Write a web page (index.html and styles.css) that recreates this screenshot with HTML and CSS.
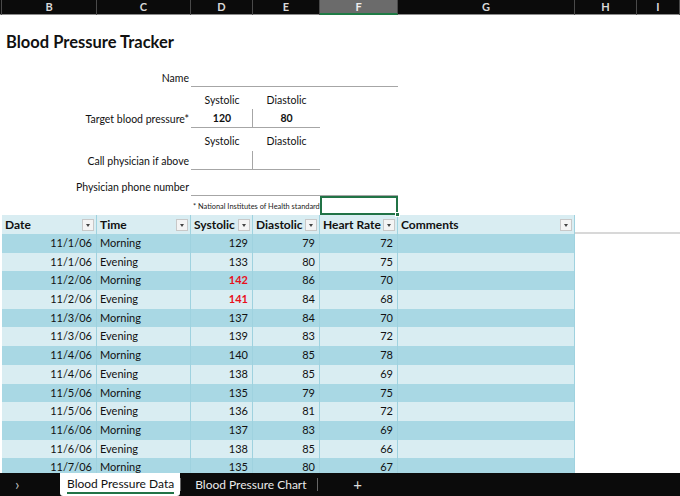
FILE: index.html
```html
<!DOCTYPE html>
<html>
<head>
<meta charset="utf-8">
<link rel="stylesheet" href="styles.css">
</head>
<body>
<div class="app">
  <div class="colhead">
    <div class="ch"></div>
    <div class="ch">B</div>
    <div class="ch">C</div>
    <div class="ch">D</div>
    <div class="ch">E</div>
    <div class="ch sel">F</div>
    <div class="ch">G</div>
    <div class="ch">H</div>
    <div class="ch">I</div>
  </div>
  <div class="sheet">
    <div class="title">Blood Pressure Tracker</div>

    <div class="frow h23">
      <div class="lbl">Name</div>
      <div class="cell ul"></div><div class="cell ul"></div><div class="cell ul"></div>
    </div>
    <div class="frow h22">
      <div class="lbl"></div>
      <div class="cell ctr">Systolic</div><div class="cell ctr">Diastolic</div><div class="cell"></div>
    </div>
    <div class="frow h19">
      <div class="lbl">Target blood pressure*</div>
      <div class="cell ctr ul vr bold">120</div><div class="cell ctr ul bold">80</div><div class="cell"></div>
    </div>
    <div class="frow h22">
      <div class="lbl"></div>
      <div class="cell ctr">Systolic</div><div class="cell ctr">Diastolic</div><div class="cell"></div>
    </div>
    <div class="frow h20">
      <div class="lbl">Call physician if above</div>
      <div class="cell ul vr"></div><div class="cell ul"></div><div class="cell"></div>
    </div>
    <div class="frow h26">
      <div class="lbl">Physician phone number</div>
      <div class="cell ul"></div><div class="cell ul"></div><div class="cell ul"></div>
    </div>
    <div class="frow h19 note-row">
      <div class="lbl"></div>
      <div class="note">* National Institutes of Health standard</div>
      <div class="active"><span class="handle"></span></div>
    </div>

    <div class="tbl">
      <div class="th"><span>Date</span><i class="dd"></i></div>
      <div class="th"><span>Time</span><i class="dd"></i></div>
      <div class="th"><span>Systolic</span><i class="dd"></i></div>
      <div class="th"><span>Diastolic</span><i class="dd"></i></div>
      <div class="th"><span>Heart Rate</span><i class="dd"></i></div>
      <div class="th"><span>Comments</span><i class="dd"></i></div>
      <div class="freeze"></div>
    </div>
    <div id="rows"></div>
  </div>
  <div class="tabs">
    <div class="nav">&#x203A;</div>
    <div class="tab active-tab"><span>Blood Pressure Data</span></div>
    <div class="tsep"></div>
    <div class="tab">Blood Pressure Chart</div>
    <div class="tsep"></div>
    <div class="plus">+</div>
  </div>
</div>
<script src="script.js"></script>
</body>
</html>
```

FILE: script.js
```js
const data = [
  ["11/1/06","Morning",129,79,72],
  ["11/1/06","Evening",133,80,75],
  ["11/2/06","Morning",142,86,70],
  ["11/2/06","Evening",141,84,68],
  ["11/3/06","Morning",137,84,70],
  ["11/3/06","Evening",139,83,72],
  ["11/4/06","Morning",140,85,78],
  ["11/4/06","Evening",138,85,69],
  ["11/5/06","Morning",135,79,75],
  ["11/5/06","Evening",136,81,72],
  ["11/6/06","Morning",137,83,69],
  ["11/6/06","Evening",138,85,66],
  ["11/7/06","Morning",135,80,67]
];
const host = document.getElementById("rows");
data.forEach((r, i) => {
  const row = document.createElement("div");
  row.className = "tbl drow " + (i % 2 ? "light" : "dark");
  const hi = r[2] > 140;
  row.innerHTML =
    '<div class="td num">' + r[0] + '</div>' +
    '<div class="td">' + r[1] + '</div>' +
    '<div class="td num' + (hi ? ' red' : '') + '">' + r[2] + '</div>' +
    '<div class="td num">' + r[3] + '</div>' +
    '<div class="td num">' + r[4] + '</div>' +
    '<div class="td"></div>' +
    '<div class="blank"></div>';
  host.appendChild(row);
});
```

FILE: styles.css
```css
* { box-sizing: border-box; }
html, body { margin: 0; padding: 0; }
body {
  width: 680px;
  height: 496px;
  overflow: hidden;
  background: #fff;
  font-family: "Lato", "Liberation Sans", sans-serif;
  color: #111;
}
.app {
  width: 680px;
  height: 496px;
  display: flex;
  flex-direction: column;
  overflow: hidden;
}
.colhead {
  height: 15px;
  flex: none;
  display: grid;
  grid-template-columns: 2px 95px 94px 62px 67px 78px 177px 62px 1fr;
  background: #0b0b0b;
  border-bottom: 1px solid #8c8c8c;
}
.ch {
  color: #d9d9d9;
  font-size: 11px;
  font-weight: 700;
  text-align: center;
  line-height: 14px;
  border-right: 1px solid #4a4a4a;
}
.ch.sel {
  background: #6b6b6b;
  color: #eee;
  border-bottom: 2px solid #1e7b45;
  line-height: 13px;
}
.sheet {
  flex: 1;
  overflow: hidden;
}
.title {
  height: 49px;
  padding: 17px 0 0 6px;
  font-size: 16.5px;
  font-weight: 700;
  line-height: 20px;
  color: #111;
}
.frow {
  display: grid;
  grid-template-columns: 2px 189px 62px 67px 78px 1fr;
  font-size: 10.5px;
  line-height: 14px;
}
.frow::before { content: ""; }
.h19 { height: 19px; }
.h20 { height: 20px; }
.h22 { height: 22px; }
.h23 { height: 23px; }
.h26 { height: 26px; }
.lbl {
  text-align: right;
  padding: 0 2px 2px 0;
  align-self: end;
  white-space: nowrap;
}
.cell {
  display: flex;
  align-items: flex-end;
  padding-bottom: 2px;
}
.ctr { justify-content: center; }
.bold { font-weight: 700; }
.ul { border-bottom: 1px solid #a6a6a6; }
.vr { position: relative; }
.vr::after {
  content: "";
  position: absolute;
  right: 0;
  bottom: 0;
  height: 18px;
  border-right: 1px solid #a6a6a6;
}
.note-row { font-size: 7.4px; }
.note {
  grid-column: 3 / 5;
  align-self: center;
  padding: 2px 0 0 2px;
  white-space: nowrap;
  overflow: hidden;
  color: #222;
}
.active {
  border: 2px solid #217346;
  position: relative;
  background: #fff;
}
.handle {
  position: absolute;
  right: -4px;
  bottom: -4px;
  width: 5px;
  height: 5px;
  background: #217346;
  border: 1px solid #fff;
}
.tbl {
  display: grid;
  grid-template-columns: 2px 95px 94px 62px 67px 78px 177px 1fr;
  height: 19px;
}
.tbl::before { content: ""; }
.th {
  background: #d9edf2;
  border-right: 1px solid #9fd2df;
  display: flex;
  align-items: center;
  justify-content: space-between;
  padding: 0 2px 0 3px;
  font-size: 12px;
  font-weight: 700;
  color: #111;
}
.dd {
  width: 12px;
  height: 12px;
  background: #f4f4f4;
  border: 1px solid #c8c8c8;
  position: relative;
  flex: none;
}
.dd::after {
  content: "";
  position: absolute;
  left: 3px;
  top: 4px;
  border-left: 2.5px solid transparent;
  border-right: 2.5px solid transparent;
  border-top: 3px solid #444;
}
.freeze {
  border-bottom: 2px solid #d8d8d8;
  height: 19px;
}
.drow { height: 18.7px; }
.td {
  border-right: 1px solid #9fd2df;
  font-size: 11px;
  line-height: 18.7px;
  padding: 0 3px;
  white-space: nowrap;
}
.dark .td { background: #a9d8e4; }
.light .td { background: #d9edf2; }
.num { text-align: right; padding-right: 4px; }
.red { color: #e8101c; font-weight: 700; }
.blank { background: #fff; }
.tabs {
  height: 23px;
  flex: none;
  background: #0b0b0b;
  display: flex;
  align-items: stretch;
  color: #eaeaea;
  font-size: 12px;
}
.nav {
  width: 60px;
  padding-left: 15px;
  font-size: 16px;
  line-height: 22px;
  color: #bbb;
}
.tab {
  padding: 0 10px 0 14px;
  line-height: 23px;
  white-space: nowrap;
}
.active-tab {
  background: #fff;
  color: #111;
  padding: 0 6px 0 7px;
  border-radius: 0 0 3px 3px;
  display: flex;
  align-items: center;
}
.active-tab span {
  border-bottom: 2px solid #217346;
  line-height: 17px;
}
.tsep {
  width: 1px;
  background: #666;
  margin: 5px 0;
}
.plus {
  width: 80px;
  text-align: center;
  font-size: 15px;
  line-height: 22px;
  color: #ddd;
}
```
